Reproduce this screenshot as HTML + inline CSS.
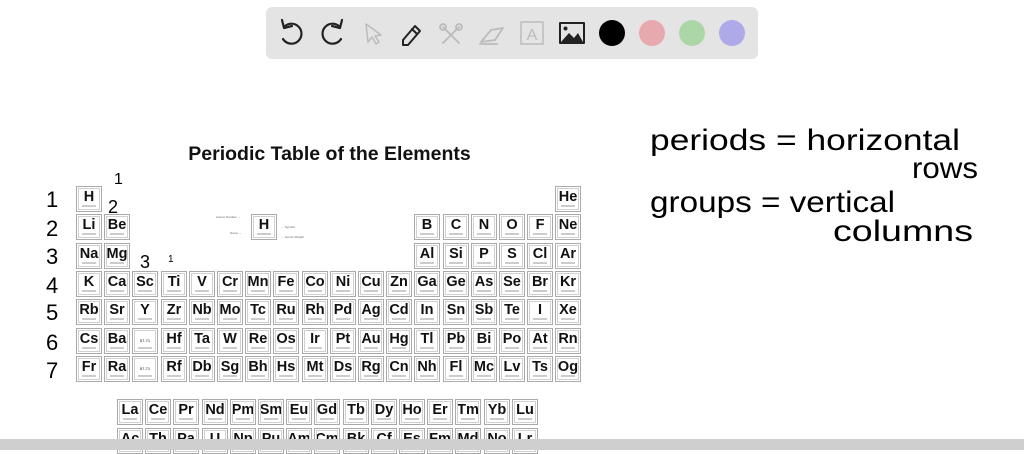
<!DOCTYPE html>
<html><head><meta charset="utf-8">
<style>
body{margin:0;width:1024px;height:450px;background:#fff;overflow:hidden;position:relative;font-family:"Liberation Sans",sans-serif}
.tb{position:absolute;left:266px;top:7px;width:492px;height:52px;background:#e4e4e4;border-radius:6px}
.c{position:absolute;width:24px;height:24px;border:1px solid #aaa;box-sizing:border-box;background:#fff}
.c:after{content:"";position:absolute;left:1px;top:1px;right:1px;bottom:1px;border:1px solid #d0d0d0}
.c b{position:absolute;left:-2px;right:-2px;top:2px;text-align:center;font-size:14.5px;font-weight:bold;color:#111}
.c i{position:absolute;left:5px;right:5px;bottom:4px;height:2px;background:#ccc}
.t{position:absolute;left:0;width:659px;top:143px;text-align:center;font-weight:bold;font-size:19.5px;color:#111}
.bar{position:absolute;left:0;top:439px;width:1024px;height:11px;background:#cfcfcf}
</style></head><body>
<div class="tb"></div>
<svg width="1024" height="450" style="position:absolute;left:0;top:0" fill="none" stroke-linecap="round" stroke-linejoin="round">
<g stroke="#222" stroke-width="2.2">
<path d="M284 27 A10 10 0 1 1 283 39"/><path d="M282 20 L284 28 L292 26"/>
<path d="M340 27 A10 10 0 1 0 341 39"/><path d="M342 20 L340 28 L332 26"/>
</g>
<path d="M366 24 L368 42 L372 37 L376 44 L379 42 L375 36 L381 35 Z" stroke="#bbb" stroke-width="1.5"/>
<path d="M403 40 L403 45 L408 45 L420 31 L415 26 Z M412 29 L417 34" stroke="#222" stroke-width="2"/>
<g stroke="#bbb" stroke-width="1.8"><path d="M443 43 L459 27 M443 27 L459 43"/><circle cx="443" cy="27" r="3"/><circle cx="459" cy="27" r="3"/></g>
<path d="M481 42 L491 30 L503 28 L495 40 Z M480 44 L497 44" stroke="#bbb" stroke-width="1.8"/>
<rect x="521" y="22" width="22" height="22" stroke="#bbb" stroke-width="1.5"/><text x="532" y="40" font-size="16" fill="#bbb" stroke="none" text-anchor="middle" font-family="Liberation Sans">A</text>
<rect x="560" y="23" width="24" height="20" stroke="#222" stroke-width="2"/><circle cx="565.5" cy="28.5" r="2" fill="#222" stroke="none"/><path d="M561 42 L569 33 L574 38 L578 33 L583 42 Z" fill="#222" stroke="none"/>
<circle cx="612" cy="33" r="13" fill="#000" stroke="none"/>
<circle cx="652" cy="33" r="13" fill="#e8a9ae" stroke="none"/>
<circle cx="692" cy="33" r="13" fill="#acd6a8" stroke="none"/>
<circle cx="732" cy="33" r="13" fill="#aeaaea" stroke="none"/>
<g font-family="Liberation Sans" fill="#000" stroke="none" font-size="30">
<text x="650" y="150" textLength="310" lengthAdjust="spacingAndGlyphs">periods = horizontal</text>
<text x="912" y="178" textLength="66" lengthAdjust="spacingAndGlyphs">rows</text>
<text x="650" y="212" textLength="245" lengthAdjust="spacingAndGlyphs">groups = vertical</text>
<text x="833" y="241" textLength="140" lengthAdjust="spacingAndGlyphs">columns</text>
<g font-size="22">
<text x="46" y="207">1</text><text x="46" y="236">2</text><text x="46" y="264">3</text><text x="46" y="293">4</text><text x="46" y="320">5</text><text x="46" y="350">6</text><text x="46" y="378">7</text>
<text x="114" y="184" font-size="16">1</text><text x="108" y="213" font-size="18">2</text><text x="140" y="268" font-size="18">3</text><text x="168" y="262" font-size="10">1</text>
</g></g>
<g font-family="Liberation Sans" font-size="3" fill="#666" stroke="none"><text x="216" y="218">Atomic Number →</text><text x="230" y="234">Name →</text><text x="281" y="228">← Symbol</text><text x="281" y="238">← Atomic Weight</text></g>
</svg>
<div class="t">Periodic Table of the Elements</div>
<div id="g"></div>
<div class="bar"></div>
<script>
var rows=[
["H",0,0],["He",17,0],
["Li",0,1],["Be",1,1],["B",12,1],["C",13,1],["N",14,1],["O",15,1],["F",16,1],["Ne",17,1],
["Na",0,2],["Mg",1,2],["Al",12,2],["Si",13,2],["P",14,2],["S",15,2],["Cl",16,2],["Ar",17,2]];
var r4="K Ca Sc Ti V Cr Mn Fe Co Ni Cu Zn Ga Ge As Se Br Kr".split(" ");
var r5="Rb Sr Y Zr Nb Mo Tc Ru Rh Pd Ag Cd In Sn Sb Te I Xe".split(" ");
var r6="Cs Ba · Hf Ta W Re Os Ir Pt Au Hg Tl Pb Bi Po At Rn".split(" ");
var r7="Fr Ra · Rf Db Sg Bh Hs Mt Ds Rg Cn Nh Fl Mc Lv Ts Og".split(" ");
[r4,r5,r6,r7].forEach(function(r,k){r.forEach(function(s,i){rows.push([s,i,3+k])})});
var h="";
function cell(s,x,y){h+='<div class="c" style="left:'+x+'px;top:'+y+'px;width:26px;height:26px"><b'+(s=="·"?' style="font-size:4px;top:9px;font-weight:normal">57-71':'>'+s)+'</b><i></i></div>';}
rows.forEach(function(e){cell(e[0],Math.round(76+e[1]*28.2),Math.round(186+e[2]*28.3))});
cell("H",251,214);
"La Ce Pr Nd Pm Sm Eu Gd Tb Dy Ho Er Tm Yb Lu".split(" ").forEach(function(s,i){cell(s,Math.round(117+i*28.2),399)});
"Ac Th Pa U Np Pu Am Cm Bk Cf Es Fm Md No Lr".split(" ").forEach(function(s,i){cell(s,Math.round(117+i*28.2),428)});
document.getElementById("g").innerHTML=h;
</script>
</body></html>
